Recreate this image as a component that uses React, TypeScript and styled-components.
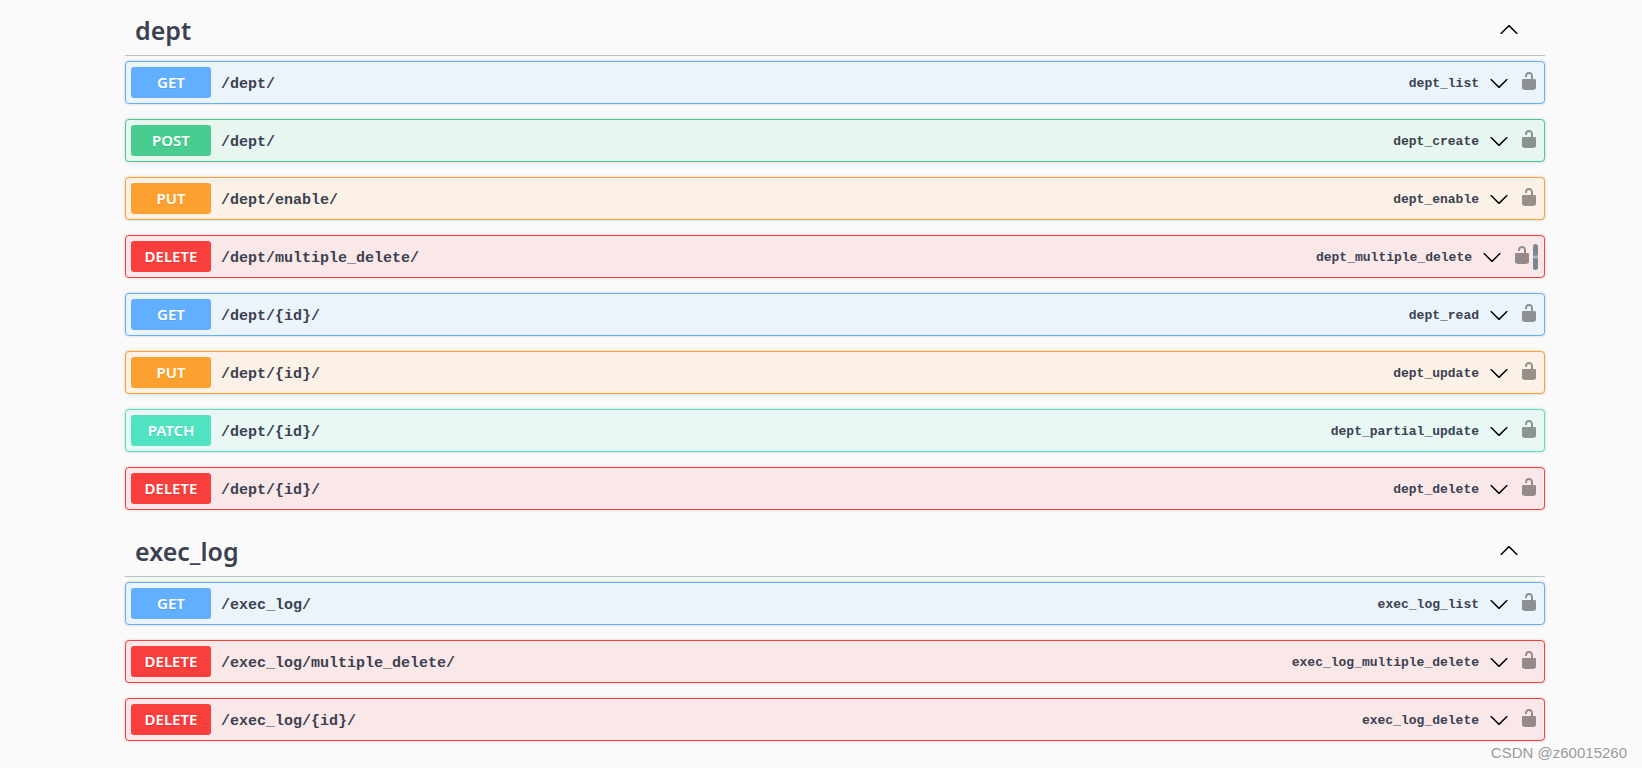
import React from "react";
import styled, { createGlobalStyle } from "styled-components";

const GlobalStyle = createGlobalStyle`
  *, *::before, *::after { box-sizing: border-box; }
  body {
    margin: 0;
    background: #fafafa;
    color: #3b4151;
    font-family: "Noto Sans", sans-serif;
  }
`;

type Method = "get" | "post" | "put" | "delete" | "patch";

const palette: Record<Method, { strong: string; soft: string }> = {
  get: { strong: "#61affe", soft: "#ebf3fb" },
  post: { strong: "#49cc90", soft: "#e8f6f0" },
  put: { strong: "#fca130", soft: "#fbf1e6" },
  delete: { strong: "#f93e3e", soft: "#fae7e7" },
  patch: { strong: "#50e3c2", soft: "#e9f8f5" },
};

const Page = styled.main`
  position: relative;
  min-height: 100vh;
  padding: 4px 97px 12px 125px;
`;

const TagHeader = styled.header`
  display: flex;
  align-items: center;
  justify-content: space-between;
  height: 52px;
  margin-bottom: 5px;
  padding: 0 20px 0 10px;
  border-bottom: 1px solid rgba(59, 65, 81, 0.3);
`;

const TagTitle = styled.h3`
  margin: 0;
  font-size: 25px;
  font-weight: 600;
  line-height: 32px;
`;

const IconButton = styled.button`
  display: flex;
  padding: 0;
  border: 0;
  background: none;
  color: #000;
  cursor: pointer;
`;

const TagToggle = styled(IconButton)`
  padding: 0 6px 2px;
`;

const OperationList = styled.ul`
  margin: 0;
  padding: 0;
  list-style: none;
`;

const Operation = styled.li<{ $method: Method }>`
  display: flex;
  align-items: center;
  height: 43px;
  margin-bottom: 15px;
  padding: 5px;
  border: 1px solid ${(p) => palette[p.$method].strong};
  border-radius: 4px;
  background: ${(p) => palette[p.$method].soft};
  box-shadow: 0 0 3px rgba(0, 0, 0, 0.19);
`;

const MethodButton = styled.button<{ $method: Method }>`
  width: 80px;
  height: 31px;
  padding: 0 0 1px;
  border: 0;
  border-radius: 3px;
  background: ${(p) => palette[p.$method].strong};
  color: #fff;
  font-family: inherit;
  font-size: 15px;
  font-weight: 600;
  line-height: 20px;
  text-align: center;
  text-shadow: 0 1px 0 rgba(0, 0, 0, 0.1);
  cursor: pointer;
`;

const Path = styled.a`
  flex: 1;
  padding: 5px 10px 0;
  color: inherit;
  font-family: "Liberation Mono", monospace;
  font-size: 15px;
  font-weight: 700;
  line-height: 20px;
  text-decoration: none;
`;

const OperationId = styled.span`
  padding-top: 3px;
  font-family: "Liberation Mono", monospace;
  font-size: 13px;
  font-weight: 700;
  line-height: 20px;
`;

const ExpandButton = styled(IconButton)`
  margin: 0 10px;
  padding-top: 1px;
`;

const LockButton = styled(IconButton)`
  padding-bottom: 3px;
  opacity: 0.4;
`;

const ScrollThumb = styled.span`
  display: flex;
  align-items: center;
  justify-content: center;
  width: 5px;
  height: 26px;
  margin: 0 1px;
  border-radius: 3px;
  background: #7d8492;
`;

const Watermark = styled.span`
  position: absolute;
  right: 15px;
  bottom: 5px;
  color: #9a9a9a;
  font-family: "Liberation Sans", sans-serif;
  font-size: 15px;
  line-height: 20px;
`;

const Chevron = ({ up = false }: { up?: boolean }) => (
  <svg width="20" height="20" viewBox="0 0 20 20" fill="currentColor" aria-hidden="true">
    {up ? (
      <path d="M17.418 14.908c.272.27.709.27.979 0s.271-.701 0-.969l-7.908-7.83c-.27-.268-.707-.268-.979 0l-7.908 7.83c-.27.268-.27.701 0 .969s.709.268.979 0L10 7.767l7.418 7.141z" />
    ) : (
      <path d="M17.418 6.109c.272-.268.709-.268.979 0s.271.701 0 .969l-7.908 7.83c-.27.268-.707.268-.979 0l-7.908-7.83c-.27-.268-.27-.701 0-.969s.709-.268.979 0L10 13.25l7.418-7.141z" />
    )}
  </svg>
);

const OpenLock = () => (
  <svg width="20" height="20" viewBox="0 0 20 20" fill="currentColor" aria-hidden="true">
    <path d="M15.8 8H14V5.6C14 2.703 12.665 1 10 1 7.334 1 6 2.703 6 5.6V6h2v-.801C8 3.754 8.797 3 10 3c1.203 0 2 .754 2 2.199V8H4c-.553 0-1 .646-1 1.199V17c0 .549.428 1.139.951 1.307l1.197.387C5.672 18.861 6.55 19 7.1 19h5.8c.549 0 1.428-.139 1.951-.307l1.196-.387c.524-.167.953-.757.953-1.306V9.199C17 8.646 16.352 8 15.8 8z" />
  </svg>
);

const Grip = () => (
  <svg width="5" height="4" viewBox="0 0 5 4" fill="none" stroke="#c3c8d0" aria-hidden="true">
    <ellipse cx="1.5" cy="2" rx="1" ry="1.2" />
    <ellipse cx="3.7" cy="2" rx="1" ry="1.2" />
  </svg>
);

interface OperationData {
  method: Method;
  path: string;
  id: string;
  scrollable?: boolean;
}

const tags: { name: string; operations: OperationData[] }[] = [
  {
    name: "dept",
    operations: [
      { method: "get", path: "/dept/", id: "dept_list" },
      { method: "post", path: "/dept/", id: "dept_create" },
      { method: "put", path: "/dept/enable/", id: "dept_enable" },
      { method: "delete", path: "/dept/multiple_delete/", id: "dept_multiple_delete", scrollable: true },
      { method: "get", path: "/dept/{id}/", id: "dept_read" },
      { method: "put", path: "/dept/{id}/", id: "dept_update" },
      { method: "patch", path: "/dept/{id}/", id: "dept_partial_update" },
      { method: "delete", path: "/dept/{id}/", id: "dept_delete" },
    ],
  },
  {
    name: "exec_log",
    operations: [
      { method: "get", path: "/exec_log/", id: "exec_log_list" },
      { method: "delete", path: "/exec_log/multiple_delete/", id: "exec_log_multiple_delete" },
      { method: "delete", path: "/exec_log/{id}/", id: "exec_log_delete" },
    ],
  },
];

export default function App() {
  return (
    <Page>
      <GlobalStyle />
      {tags.map((tag) => (
        <section key={tag.name}>
          <TagHeader>
            <TagTitle>{tag.name}</TagTitle>
            <TagToggle aria-label={`Collapse ${tag.name}`} aria-expanded>
              <Chevron up />
            </TagToggle>
          </TagHeader>
          <OperationList>
            {tag.operations.map((op) => (
              <Operation key={op.id} $method={op.method}>
                <MethodButton $method={op.method}>{op.method.toUpperCase()}</MethodButton>
                <Path href={`#/${tag.name}/${op.id}`}>{op.path}</Path>
                <OperationId>{op.id}</OperationId>
                <ExpandButton aria-label={`Expand ${op.id}`}>
                  <Chevron />
                </ExpandButton>
                <LockButton aria-label={`Authorize ${op.id}`}>
                  <OpenLock />
                </LockButton>
                {op.scrollable && (
                  <ScrollThumb>
                    <Grip />
                  </ScrollThumb>
                )}
              </Operation>
            ))}
          </OperationList>
        </section>
      ))}
      <Watermark>CSDN @z60015260</Watermark>
    </Page>
  );
}
